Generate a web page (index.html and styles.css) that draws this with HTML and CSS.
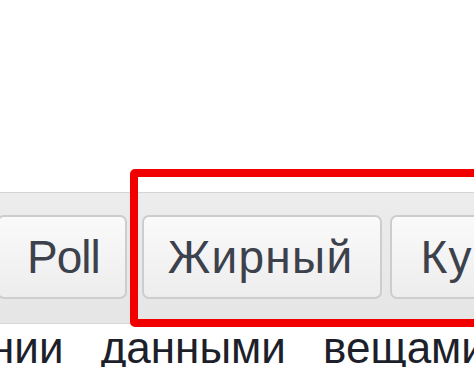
FILE: index.html
```html
<!DOCTYPE html>
<html lang="ru">
<head>
<meta charset="utf-8">
<link rel="stylesheet" href="styles.css">
</head>
<body>
<div class="page">
  <div class="spacer"></div>
  <div class="toolbar">
    <button class="btn btn-poll">Poll</button>
    <button class="btn btn-bold">Жирный</button>
    <button class="btn btn-italic">Курсив</button>
  </div>
  <p class="text">нии данными вещами</p>
  <div class="highlight"></div>
</div>
</body>
</html>
```

FILE: styles.css
```css
html, body {
  margin: 0;
  padding: 0;
  background: #ffffff;
  overflow: hidden;
}

.page {
  position: relative;
  width: 474px;
  height: 367px;
  overflow: hidden;
  font-family: "Liberation Sans", Arial, sans-serif;
}

.spacer {
  height: 192px;
}

.toolbar {
  display: flex;
  align-items: flex-start;
  border-top: 1px solid #d4d4d4;
  border-bottom: 1px solid #d8d8d8;
  background: linear-gradient(#ececec, #e6e6e6);
  margin-left: -3px;
  padding-top: 22px;
  box-sizing: border-box;
  height: 132px;
}

.btn {
  flex: none;
  height: 84px;
  border: 2px solid #cdcdcd;
  border-radius: 7px;
  background: linear-gradient(#fafafa, #ededed);
  font-family: "Liberation Sans", Arial, sans-serif;
  font-size: 46px;
  color: #3c414c;
  line-height: 1;
  box-sizing: border-box;
}

.btn-poll {
  padding: 0 25px 0 28px;
  letter-spacing: -1px;
  margin-right: 15px;
}

.btn-bold {
  padding: 0 27px 0 24px;
  letter-spacing: 1.3px;
  margin-right: 8px;
}

.btn-italic {
  padding: 0 28px;
  letter-spacing: 1.3px;
}

.text {
  margin: 0;
  font-size: 44px;
  line-height: 48px;
  color: #1d1f2a;
  white-space: nowrap;
  text-indent: -10px;
  word-spacing: 25px;
}

.highlight {
  position: absolute;
  left: 130px;
  top: 169px;
  width: 400px;
  height: 158px;
  border: 8px solid #f20000;
  border-radius: 5px;
  box-sizing: border-box;
}
```
